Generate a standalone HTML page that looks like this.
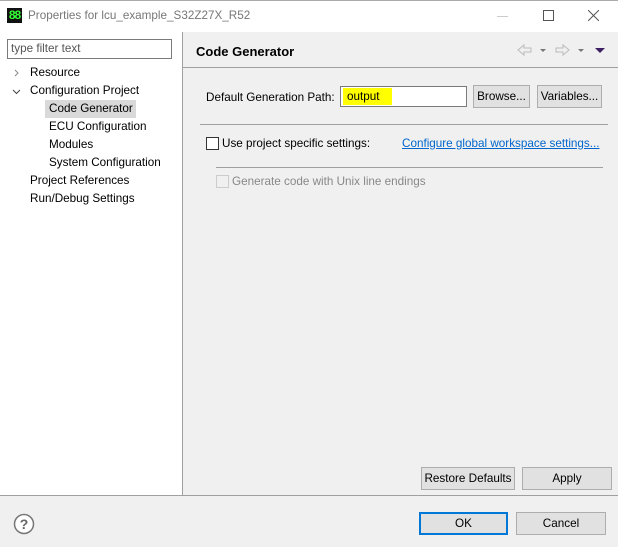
<!DOCTYPE html>
<html><head><style>
*{margin:0;padding:0;box-sizing:border-box}
body{width:618px;height:547px;background:#f0f0f0;font-family:"Liberation Sans",sans-serif;font-size:11.7px;color:#000;position:relative;overflow:hidden}
.a{position:absolute;white-space:nowrap}
.btn{position:absolute;background:#e1e1e1;border:1px solid #adadad;text-align:center;font-size:11.7px}
</style></head><body>
<div class="a" style="left:0;top:0;width:618px;height:32px;background:#fff;border-top:1px solid #aaa"></div>
<div class="a" style="left:7px;top:8px;width:15px;height:15px;background:#111;color:#3f3;font-size:12px;font-weight:bold;line-height:15px;text-align:center;letter-spacing:-1px">88</div>
<div class="a" style="left:28px;top:9px;color:#777">Properties for lcu_example_S32Z27X_R52</div>
<div class="a" style="left:497px;top:16px;width:11px;height:1px;background:#ccc"></div>
<div class="a" style="left:543px;top:10px;width:11px;height:11px;border:1px solid #555"></div>
<svg class="a" style="left:588px;top:10px" width="11" height="11"><path d="M0 0L11 11M11 0L0 11" stroke="#555"/></svg>
<div class="a" style="left:0;top:32px;width:182px;height:464px;background:#fff"></div>
<div class="a" style="left:182px;top:32px;width:1px;height:464px;background:#a0a0a0"></div>
<div class="a" style="left:0;top:495px;width:618px;height:1px;background:#a0a0a0"></div>
<div class="a" style="left:7px;top:39px;width:165px;height:20px;border:1px solid #7a7a7a;background:#fff;color:#555;padding:2px 3px">type filter text</div>
<svg class="a" style="left:13px;top:69px" width="8" height="8"><path d="M2 1L5 4L2 7" stroke="#888" fill="none"/></svg>
<svg class="a" style="left:12px;top:88px" width="9" height="8"><path d="M1 2L4.5 5.5L8 2" stroke="#444" fill="none"/></svg>
<div class="a" style="left:45px;top:100px;width:91px;height:18px;background:#d9d9d9"></div>
<div class="a" style="left:30px;top:66px">Resource</div>
<div class="a" style="left:30px;top:84px">Configuration Project</div>
<div class="a" style="left:49px;top:102px">Code Generator</div>
<div class="a" style="left:49px;top:120px">ECU Configuration</div>
<div class="a" style="left:49px;top:138px">Modules</div>
<div class="a" style="left:49px;top:156px">System Configuration</div>
<div class="a" style="left:30px;top:174px">Project References</div>
<div class="a" style="left:30px;top:192px">Run/Debug Settings</div>
<div class="a" style="left:196px;top:44px;font-weight:bold;font-size:13px">Code Generator</div>
<svg class="a" style="left:515px;top:42px" width="100" height="16">
<path d="M3 8L9 3V6H16V10H9V13Z" fill="none" stroke="#bbb"/>
<path d="M25 7H31L28 10Z" fill="#777"/>
<path d="M54 8L48 3V6H41V10H48V13Z" fill="none" stroke="#bbb"/>
<path d="M63 7H69L66 10Z" fill="#777"/>
<path d="M80 6H90L85 11Z" fill="#3a2060"/>
</svg>
<div class="a" style="left:183px;top:67px;width:435px;height:1px;background:#a0a0a0"></div>
<div class="a" style="left:206px;top:91px">Default Generation Path:</div>
<div class="a" style="left:340px;top:86px;width:127px;height:21px;border:1px solid #7a7a7a;background:#fff"></div>
<div class="a" style="left:343px;top:88px;width:49px;height:17px;background:#ff0"></div>
<div class="a" style="left:347px;top:90px">output</div>
<div class="btn" style="left:473px;top:85px;width:57px;height:23px;line-height:21px">Browse...</div>
<div class="btn" style="left:537px;top:85px;width:65px;height:23px;line-height:21px">Variables...</div>
<div class="a" style="left:200px;top:124px;width:408px;height:1px;background:#a0a0a0"></div>
<div class="a" style="left:206px;top:137px;width:13px;height:13px;border:1px solid #333;background:#fff"></div>
<div class="a" style="left:222px;top:137px">Use project specific settings:</div>
<div class="a" style="left:402px;top:137px;color:#0066cc;text-decoration:underline">Configure global workspace settings...</div>
<div class="a" style="left:216px;top:167px;width:387px;height:1px;background:#a0a0a0"></div>
<div class="a" style="left:216px;top:175px;width:13px;height:13px;border:1px solid #ccc"></div>
<div class="a" style="left:232px;top:175px;color:#888">Generate code with Unix line endings</div>
<div class="btn" style="left:421px;top:467px;width:94px;height:23px;line-height:21px">Restore Defaults</div>
<div class="btn" style="left:522px;top:467px;width:90px;height:23px;line-height:21px">Apply</div>
<svg class="a" style="left:13px;top:513px" width="22" height="22"><circle cx="11" cy="11" r="9.5" fill="#fff" stroke="#777" stroke-width="1.5"/><text x="11" y="16" text-anchor="middle" font-family="Liberation Sans" font-weight="bold" font-size="14" fill="#666">?</text></svg>
<div class="btn" style="left:419px;top:512px;width:89px;height:23px;line-height:19px;border:2px solid #0078d7">OK</div>
<div class="btn" style="left:516px;top:512px;width:90px;height:23px;line-height:21px">Cancel</div>
</body></html>
